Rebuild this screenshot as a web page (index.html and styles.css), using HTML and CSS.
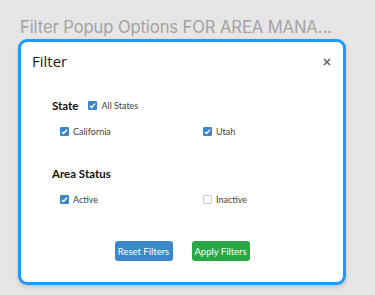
FILE: index.html
```html
<!DOCTYPE html>
<html lang="en">
<head>
  <meta charset="UTF-8">
  <meta name="viewport" content="width=device-width, initial-scale=1.0">
  <title>Filter Popup</title>
  <link rel="stylesheet" href="styles.css">
</head>
<body>
  <div class="page">
    <div class="page-title">Filter Popup Options FOR AREA MANA...</div>

    <div class="modal">
      <div class="modal-header">
        <span class="modal-title">Filter</span>
        <button class="close" aria-label="Close">
          <svg width="8" height="8" viewBox="0 0 8 8">
            <path d="M1 1 L7 7 M7 1 L1 7" stroke="#555" stroke-width="1.4" fill="none"/>
          </svg>
        </button>
      </div>

      <div class="modal-body">
        <div class="group state-group">
          <div class="group-head">
            <span class="group-label">State</span>
            <label class="check"><span class="box checked"></span>All States</label>
          </div>
          <div class="options">
            <label class="check"><span class="box checked"></span>California</label>
            <label class="check"><span class="box checked"></span>Utah</label>
          </div>
        </div>

        <div class="group status-group">
          <div class="group-head">
            <span class="group-label">Area Status</span>
          </div>
          <div class="options">
            <label class="check"><span class="box checked"></span>Active</label>
            <label class="check"><span class="box"></span>Inactive</label>
          </div>
        </div>

        <div class="actions">
          <button class="btn btn-reset">Reset Filters</button>
          <button class="btn btn-apply">Apply Filters</button>
        </div>
      </div>
    </div>
  </div>
</body>
</html>
```

FILE: styles.css
```css
* {
  box-sizing: border-box;
  margin: 0;
  padding: 0;
}

html, body {
  height: 100%;
  background: #e6e6e6;
  font-family: 'Lato', 'Open Sans', sans-serif;
  color: #333;
}

.page {
  padding: 17px 29px 0 18px;
}

.page-title {
  font-family: 'Inter', 'Roboto', sans-serif;
  font-size: 16.6px;
  line-height: 20px;
  color: #a3a3a3;
  margin-left: 2px;
  margin-bottom: 2px;
  white-space: nowrap;
  letter-spacing: -0.1px;
}

.modal {
  width: 328px;
  height: 246px;
  background: #fff;
  border: 3px solid #1a9cff;
  border-radius: 9px;
  box-shadow: 0 2px 4px rgba(0,0,0,0.15);
}

.modal-header {
  display: flex;
  justify-content: space-between;
  align-items: center;
  padding: 9px 12px 0 11px;
  height: 29px;
}

.modal-title {
  font-family: 'Open Sans', sans-serif;
  font-size: 15px;
  line-height: 20px;
  color: #222;
}

.close {
  border: none;
  background: none;
  width: 8px;
  height: 8px;
  display: flex;
  margin-top: 1px;
}

.modal-body {
  padding: 26px 0 0 31px;
}

.group-head {
  display: flex;
  align-items: center;
  height: 16px;
}

.group-label {
  font-weight: 700;
  font-size: 11.5px;
  color: #111;
  margin-right: 10px;
}

.options {
  display: grid;
  grid-template-columns: 143px 143px;
  padding-left: 8px;
  margin-top: 11px;
}

.status-group {
  margin-top: 27px;
}

.check {
  display: flex;
  align-items: center;
  font-size: 9px;
  color: #444;
  height: 14px;
}

.box {
  width: 9px;
  height: 9px;
  border: 1px solid #ccc;
  border-radius: 1px;
  margin-right: 4px;
  background: #fff;
}

.box.checked {
  border-color: #3a86c8;
  background: #3a86c8 url("data:image/svg+xml,%3Csvg xmlns='http://www.w3.org/2000/svg' viewBox='0 0 9 9'%3E%3Cpath d='M2 5 L3.6 6.4 L7 2.6' stroke='white' stroke-width='1.4' fill='none'/%3E%3C/svg%3E") center/9px 9px no-repeat;
}

.actions {
  display: flex;
  justify-content: center;
  gap: 19px;
  margin-top: 35px;
  margin-left: -31px;
}

.btn {
  font-family: 'Lato', sans-serif;
  font-size: 9.5px;
  color: #fff;
  border: none;
  border-radius: 3px;
  width: 58px;
  height: 20px;
}

.btn-reset {
  background: #3a88c9;
}

.btn-apply {
  background: #28a745;
}
```
